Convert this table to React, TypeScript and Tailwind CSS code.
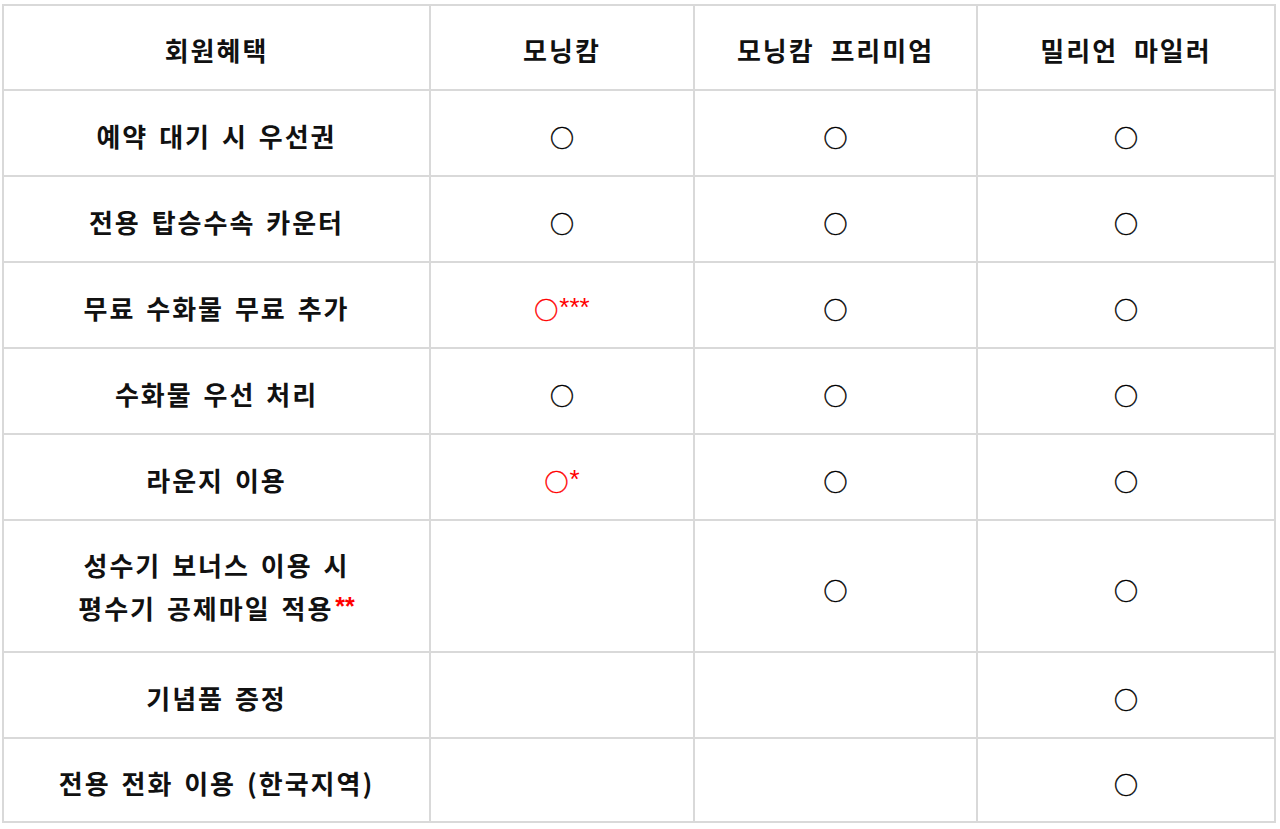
import React from "react";

const font = { fontFamily: '"Noto Sans CJK KR", "Noto Sans", sans-serif' };
const latin = { fontFamily: '"Liberation Sans", Arial, sans-serif' };

type Mark = "o" | "" | { red: string };

const rows: { label: React.ReactNode; cells: Mark[]; tall?: boolean }[] = [
  { label: "예약 대기 시 우선권", cells: ["o", "o", "o"] },
  { label: "전용 탑승수속 카운터", cells: ["o", "o", "o"] },
  { label: "무료 수화물 무료 추가", cells: [{ red: "***" }, "o", "o"] },
  { label: "수화물 우선 처리", cells: ["o", "o", "o"] },
  { label: "라운지 이용", cells: [{ red: "*" }, "o", "o"] },
  {
    label: (
      <>
        성수기 보너스 이용 시
        <br />
        평수기 공제마일 적용
        <span className="text-[#ff0000] text-[25px] font-bold relative top-[-4px] tracking-[0px] ml-[2px]" style={latin}>
          **
        </span>
      </>
    ),
    cells: ["", "o", "o"],
    tall: true,
  },
  { label: "기념품 증정", cells: ["", "", "o"] },
  { label: "전용 전화 이용 (한국지역)", cells: ["", "", "o"] },
];

function Circle({ red, suffix }: { red?: boolean; suffix?: string }) {
  return (
    <span className={`inline-flex items-start ${red ? "text-[#ff0000]" : "text-black"}`}>
      <span className="text-[24px] leading-[44px] font-normal [-webkit-text-stroke:0.4px]">○</span>
      {suffix && (
        <span className="text-[26px] leading-[26px] font-normal mt-[7px] ml-[1px]" style={latin}>
          {suffix}
        </span>
      )}
    </span>
  );
}

function MarkCell({ m }: { m: Mark }) {
  if (m === "") return <div className="bg-white" />;
  if (m === "o")
    return (
      <div className="bg-white flex items-center justify-center pt-[8px]">
        <Circle />
      </div>
    );
  return (
    <div className="bg-white flex items-center justify-center pt-[8px]">
      <Circle red suffix={m.red} />
    </div>
  );
}

export default function App() {
  return (
    <div className="w-[1280px] h-[829px] bg-white" style={font}>
      <div className="ml-[2px] mt-[4px] w-[1274px] bg-[#d9d9d9] p-[2px] grid grid-cols-[425px_262px_281px_296px] gap-[2px] grid-rows-[83px_84px_84px_84px_84px_84px_130px_84px_82px]">
        {["회원혜택", "모닝캄", "모닝캄  프리미엄", "밀리언  마일러"].map((h) => (
          <div
            key={h}
            className="bg-white flex items-center justify-center pt-[3px] text-[26px] font-bold text-[#111] tracking-[2px] whitespace-pre"
          >
            {h}
          </div>
        ))}
        {rows.map((r, i) => (
          <React.Fragment key={i}>
            <div
              className={`bg-white flex items-center justify-center ${
                r.tall ? "pt-[2px]" : "pt-[5px]"
              } text-center text-[26px] leading-[43px] font-bold text-[#111] tracking-[2px] [word-spacing:3px]`}
            >
              <div>{r.label}</div>
            </div>
            {r.cells.map((c, j) => (
              <MarkCell key={j} m={c} />
            ))}
          </React.Fragment>
        ))}
      </div>
    </div>
  );
}
